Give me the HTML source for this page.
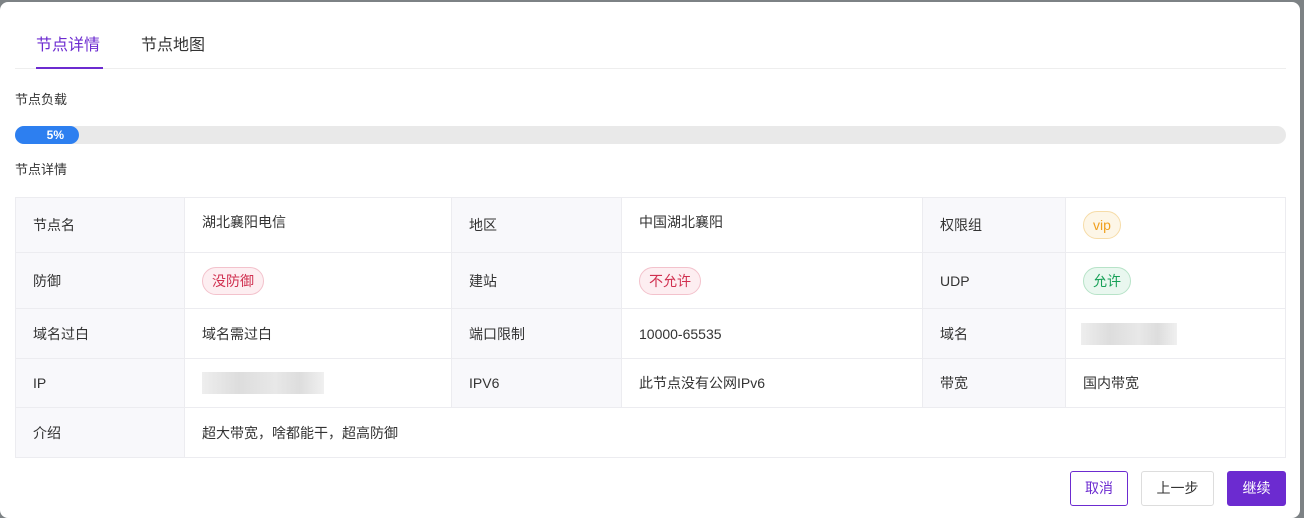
<!DOCTYPE html>
<html><head><meta charset="utf-8"><style>
*{box-sizing:border-box;margin:0;padding:0}
body{width:1304px;height:518px;background:#7d8285;font-family:"Liberation Sans","Noto Sans CJK SC",sans-serif;overflow:hidden;position:relative}
.m{position:absolute;left:0;top:2px;width:1300px;height:516px;background:#fff;border-radius:8px}
.c{position:absolute;left:0;top:-2px;width:1300px;height:518px}
.t{position:absolute;font-size:16px;color:#333;top:31px}
.a{color:#6c2bd0}
.ul{position:absolute;left:36px;top:67px;width:67px;height:2px;background:#6c2bd0}
.ln{position:absolute;left:15px;right:14px;top:68px;height:1px;background:#eee}
.lb{position:absolute;left:15px;font-size:13px;color:#333}
.bar{position:absolute;left:15px;top:126px;width:1271px;height:18px;background:#e9e9e9;border-radius:9px}
.fill{width:64px;height:18px;background:#2d7ff0;border-radius:9px;color:#fff;font-size:12px;font-weight:bold;text-align:right;padding-right:15px;line-height:18px}
table{position:absolute;left:15px;top:197px;width:1271px;border-collapse:collapse;font-size:14px;color:#333}
td{border:1px solid #ececf0;padding:0 17px}
td.k{background:#f8f8fb}
.tag{display:inline-block;height:28px;line-height:26px;padding:0 9px;border-radius:14px;border:1px solid;font-size:14px}
.r{background:#fdeef1;border-color:#f3c2cc;color:#d03050}
.g{background:#e9f7ef;border-color:#b7e3c8;color:#18a058}
.y{background:#fdf6e7;border-color:#f6dca8;color:#f0a020}
.blur{display:inline-block;height:22px;background:linear-gradient(90deg,#eee,#ddd 30%,#e8e8e8 60%,#ddd 80%,#f0f0f0);vertical-align:middle}
.btn{position:absolute;top:471px;height:35px;font-size:14px;line-height:33px;text-align:center;border-radius:3px;border:1px solid}
</style></head><body><div class="m"><div class="c">
<div class="t a" style="left:36px">节点详情</div>
<div class="t" style="left:141px">节点地图</div>
<div class="ln"></div><div class="ul"></div>
<div class="lb" style="top:89px">节点负载</div>
<div class="bar"><div class="fill">5%</div></div>
<div class="lb" style="top:159px">节点详情</div>
<table>
<tr style="height:55px"><td class="k" style="width:169px">节点名</td><td style="width:267px;padding-bottom:6px">湖北襄阳电信</td><td class="k" style="width:170px">地区</td><td style="width:301px;padding-bottom:6px">中国湖北襄阳</td><td class="k" style="width:143px">权限组</td><td><span class="tag y">vip</span></td></tr>
<tr style="height:56px"><td class="k">防御</td><td><span class="tag r">没防御</span></td><td class="k">建站</td><td><span class="tag r">不允许</span></td><td class="k">UDP</td><td><span class="tag g">允许</span></td></tr>
<tr style="height:50px"><td class="k">域名过白</td><td>域名需过白</td><td class="k">端口限制</td><td>10000-65535</td><td class="k">域名</td><td style="padding-left:15px"><span class="blur" style="width:96px"></span></td></tr>
<tr style="height:49px"><td class="k">IP</td><td><span class="blur" style="width:122px"></span></td><td class="k">IPV6</td><td>此节点没有公网IPv6</td><td class="k">带宽</td><td>国内带宽</td></tr>
<tr style="height:50px"><td class="k">介绍</td><td colspan="5">超大带宽，啥都能干，超高防御</td></tr>
</table>
<div class="btn" style="left:1070px;width:58px;border-color:#6c2bd0;color:#6c2bd0">取消</div>
<div class="btn" style="left:1141px;width:73px;border-color:#ddd;color:#333">上一步</div>
<div class="btn" style="left:1227px;width:59px;border-color:#6c2bd0;background:#6c2bd0;color:#fff">继续</div>
</div></div></body></html>
